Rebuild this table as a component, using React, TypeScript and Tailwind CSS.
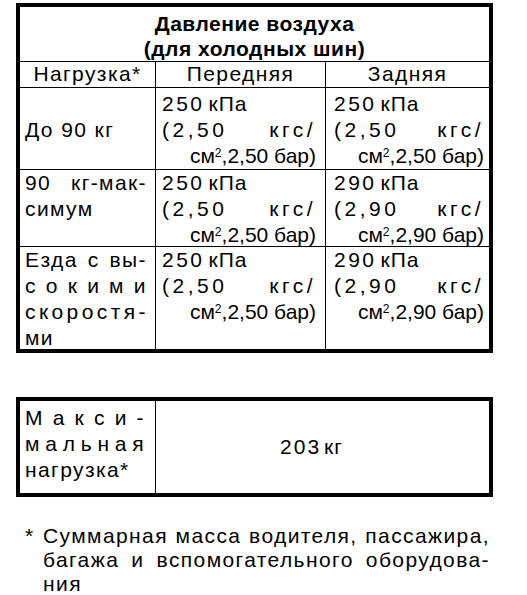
const Spread = ({ text, className = '' }: { text: string; className?: string }) => (
  <div className={`flex justify-between ${className}`}>
    {text.split('').map((c, i) => (
      <span key={i}>{c}</span>
    ))}
  </div>
);

const Words = ({ words, className = '' }: { words: string[]; className?: string }) => (
  <div className={`flex justify-between ${className}`}>
    {words.map((w, i) => (
      <span key={i}>{w}</span>
    ))}
  </div>
);

function Pressure({ kpa, kgs }: { kpa: string; kgs: string }) {
  return (
    <>
      <div>
        <span className="tracking-[2.5px]">{kpa}</span>
        <span className="ml-[4px] tracking-[1px]">кПа</span>
      </div>
      <div className="flex justify-between">
        <span className="tracking-[3.5px]">({kgs}</span>
        <span className="tracking-[3.5px]">кгс/</span>
      </div>
      <div className="text-right tracking-normal">
        см<sup className="text-[12px]">2</sup>,{kgs} бар)
      </div>
    </>
  );
}

function Row({
  h,
  first,
  front,
  rear,
  center = false,
  pt = 'pt-0',
}: {
  h: string;
  first: React.ReactNode;
  front: [string, string];
  rear: [string, string];
  center?: boolean;
  pt?: string;
}) {
  return (
    <div className={`grid grid-cols-[136px_170px_1fr] border-t border-black ${h}`}>
      <div className={`border-r border-black pl-[5px] pr-[8px] ${pt} ${center ? 'flex items-center' : ''}`}>
        {first}
      </div>
      <div className={`border-r border-black pl-[6px] pr-[9px] ${pt}`}>
        <Pressure kpa={front[0]} kgs={front[1]} />
      </div>
      <div className={`pl-[8px] pr-[5px] ${pt}`}>
        <Pressure kpa={rear[0]} kgs={rear[1]} />
      </div>
    </div>
  );
}

export default function App() {
  return (
    <div className="min-h-[595px] w-[527px] bg-white pt-[3px] font-['Liberation_Sans',Arial,sans-serif] text-[21px] leading-[26px] tracking-[1.4px] text-black">
      <div className="ml-[16px] w-[477px] border-4 border-black">
        <div className="h-[54px] pt-[4px] text-center font-bold leading-[25px] tracking-[0.5px]">
          Давление воздуха
          <br />
          (для холодных шин)
        </div>
        <div className="grid h-[26px] grid-cols-[136px_170px_1fr] border-t border-black text-center leading-[24px]">
          <div className="border-r border-black">Нагрузка*</div>
          <div className="border-r border-black">Передняя</div>
          <div>Задняя</div>
        </div>
        <Row h="h-[82px]" pt="pt-[3px]" center first={<span>До 90 кг</span>} front={['250', '2,50']} rear={['250', '2,50']} />
        <Row
          h="h-[77px]"
          first={
            <>
              <Words words={['90', 'кг-мак-']} />
              <div>симум</div>
            </>
          }
          front={['250', '2,50']}
          rear={['290', '2,90']}
        />
        <Row
          h="h-[103px]"
          first={
            <>
              <Words words={['Езда', 'с', 'вы-']} />
              <Spread text="сокими" />
              <Spread text="скоростя-" />
              <div>ми</div>
            </>
          }
          front={['250', '2,50']}
          rear={['290', '2,90']}
        />
      </div>

      <div className="ml-[16px] mt-[44px] grid h-[100px] w-[477px] grid-cols-[136px_1fr] border-4 border-black">
        <div className="border-r border-black pl-[5px] pr-[10px] pt-[4px]">
          <Spread text="Макси-" />
          <Spread text="мальная" />
          <div>нагрузка*</div>
        </div>
        <div className="flex items-center justify-center pr-[22px]">
          <span className="tracking-[2px]">203</span>
          <span className="ml-[3px] tracking-[1px]">кг</span>
        </div>
      </div>

      <div className="ml-[25px] mt-[27px] w-[465px] leading-[24px]">
        <div className="flex">
          <span className="w-[18px]">*</span>
          <Words className="flex-1" words={['Суммарная', 'масса', 'водителя,', 'пассажира,']} />
        </div>
        <Words className="ml-[18px]" words={['багажа', 'и', 'вспомогательного', 'оборудова-']} />
        <div className="ml-[18px]">ния</div>
      </div>
    </div>
  );
}
